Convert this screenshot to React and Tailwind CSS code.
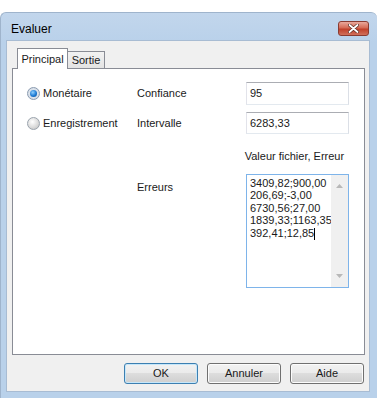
import { useState } from 'react'

const font = { fontFamily: '"Liberation Sans", Arial, sans-serif' }

function Radio({ checked, label }) {
  return (
    <div className="flex items-center gap-[3px]">
      <span
        className={
          'w-[13px] h-[13px] rounded-full border flex items-center justify-center ' +
          (checked
            ? 'border-[#8a9bb0] bg-[radial-gradient(circle,#e8eef5_0%,#d0d8e2_100%)]'
            : 'border-[#9aa3ad] bg-[radial-gradient(circle_at_40%_35%,#ffffff_0%,#d8d8d8_60%,#b9b9b9_100%)]')
        }
      >
        {checked && (
          <span className="w-[7px] h-[7px] rounded-full bg-[radial-gradient(circle_at_40%_35%,#8fd0ff_0%,#1c7ad4_55%,#0a4d92_100%)]" />
        )}
      </span>
      <span>{label}</span>
    </div>
  )
}

function Button({ children, primary }) {
  return (
    <button
      className={
        'w-[74px] h-[21px] rounded-[3px] border text-[11px] text-[#1a1a1a] bg-[linear-gradient(#f2f2f2_0%,#ebebeb_45%,#dddddd_50%,#cfcfcf_100%)] ' +
        (primary
          ? 'border-[#3c7fb1] shadow-[inset_0_0_0_1px_#c6e7fa]'
          : 'border-[#707070] shadow-[inset_0_0_0_1px_#fcfcfc]')
      }
    >
      {children}
    </button>
  )
}

const lines = ['3409,82;900,00', '206,69;-3,00', '6730,56;27,00', '1839,33;1163,35', '392,41;12,85']

export default function App() {
  const [tab] = useState('principal')

  return (
    <div className="w-[377px] h-[398px] bg-white pt-[12px] text-[11px] text-[#1a1a1a]" style={font}>
      {/* window frame */}
      <div className="w-[377px] h-[386px] rounded-t-[6px] bg-[linear-gradient(#c2d6ec,#b9d1ea_30px)] border-t border-l border-[#9fb4cc] flex flex-col">
        {/* title bar */}
        <div className="h-[27px] flex items-center justify-between pl-[10px] pr-[8px]">
          <span className="text-[12px] text-black pt-[5px]">Evaluer</span>
          <div className="mt-[3px] w-[31px] h-[15px] rounded-[3px] border border-[#8a3b31] bg-[linear-gradient(#e9a99c_0%,#d56a55_45%,#c0402a_55%,#d0705c_100%)] flex items-center justify-center">
            <svg width="11" height="9" viewBox="0 0 11 9">
              <path d="M1.5 1 L9.5 8 M9.5 1 L1.5 8" stroke="#5a2a22" strokeWidth="3.2" strokeLinecap="round" />
              <path d="M1.5 1 L9.5 8 M9.5 1 L1.5 8" stroke="#ffffff" strokeWidth="1.8" strokeLinecap="round" />
            </svg>
          </div>
        </div>

        {/* client area */}
        <div className="ml-[5px] w-[364px] h-[352px] bg-[#f0f0f0] border border-[#a8bcd3] flex flex-col px-[5px]">
          {/* tabs */}
          <div className="flex items-end h-[27px] pl-[5px]">
            <div
              className={
                'w-[51px] h-[21px] border border-b-0 border-[#898c95] flex items-center justify-center relative -mb-px z-10 ' +
                (tab === 'principal' ? 'bg-white' : '')
              }
            >
              Principal
            </div>
            <div className="w-[37px] h-[17px] border border-l-0 border-b-0 border-[#898c95] flex items-center justify-center bg-[linear-gradient(#f2f2f2,#e3e3e3)]">
              Sortie
            </div>
          </div>

          {/* panel */}
          <div className="w-[353px] h-[287px] bg-white border border-[#898c95] pl-[14px] pt-[12px] flex flex-col">
            <div className="flex items-center h-[24px]">
              <div className="w-[110px]">
                <Radio checked label="Monétaire" />
              </div>
              <div className="w-[109px]">Confiance</div>
              <div className="w-[103px] h-[23px] border border-[#abadb3] border-l-[#e2e3ea] border-r-[#dbdfe6] border-b-[#e3e9ef] px-[3px] pt-[2px]">
                95
              </div>
            </div>
            <div className="flex items-center h-[22px] mt-[7px]">
              <div className="w-[110px]">
                <Radio label="Enregistrement" />
              </div>
              <div className="w-[109px]">Intervalle</div>
              <div className="w-[103px] h-[22px] border border-[#abadb3] border-l-[#e2e3ea] border-r-[#dbdfe6] border-b-[#e3e9ef] px-[3px] pt-[2px]">
                6283,33
              </div>
            </div>
            <div className="flex mt-[14px]">
              <div className="w-[219px]" />
              <div className="w-[120px] whitespace-nowrap">Valeur fichier, Erreur</div>
            </div>
            <div className="flex mt-[9px]">
              <div className="w-[110px]" />
              <div className="w-[109px] pt-[5px]">Erreurs</div>
              <div className="w-[103px] h-[114px] border border-[#7eb4ea] flex">
                <div className="w-[84px] pl-[3px] pt-[2px] leading-[12.5px] overflow-hidden whitespace-nowrap">
                  {lines.map((l, i) => (
                    <div key={i}>
                      {l}
                      {i === lines.length - 1 && <span className="inline-block w-px h-[12px] bg-black align-middle" />}
                    </div>
                  ))}
                </div>
                <div className="w-[17px] bg-[#f0f0f0] flex flex-col items-center justify-between py-[9px]">
                  <svg width="7" height="4" viewBox="0 0 7 4">
                    <path d="M0 4 L3.5 0 L7 4 Z" fill="#b8b8b8" />
                  </svg>
                  <svg width="7" height="4" viewBox="0 0 7 4">
                    <path d="M0 0 L3.5 4 L7 0 Z" fill="#b8b8b8" />
                  </svg>
                </div>
              </div>
            </div>
          </div>

          {/* buttons */}
          <div className="flex justify-end gap-[9px] mt-[8px]">
            <Button primary>OK</Button>
            <Button>Annuler</Button>
            <Button>Aide</Button>
          </div>
        </div>
      </div>
    </div>
  )
}
